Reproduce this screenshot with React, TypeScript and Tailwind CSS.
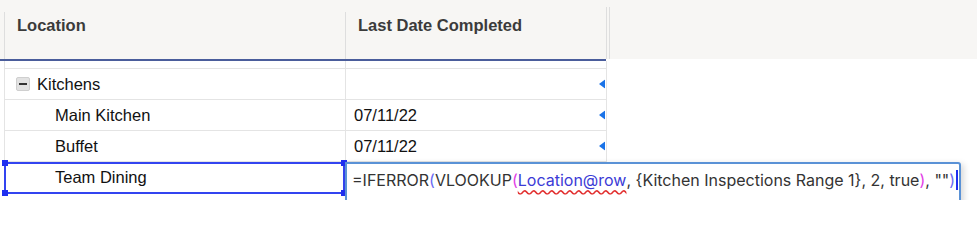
import React from "react";

const cellFont = { fontFamily: '"Liberation Sans", Arial, sans-serif' };

function Tri() {
  return (
    <svg width="6" height="9" viewBox="0 0 6 9" className="absolute right-[1px] top-1/2 -translate-y-1/2">
      <path d="M6 0 L6 9 L0 4.5 Z" fill="#1a73e8" />
    </svg>
  );
}

function Row({ name, date, indent, collapse }: { name: string; date?: string; indent: number; collapse?: boolean }) {
  return (
    <div className="flex h-[31px] border-b border-[#e4e4e4]">
      <div className="w-[341px] border-l border-[#e4e4e4] flex items-center" style={cellFont}>
        <div className="flex items-center" style={{ paddingLeft: indent }}>
          {collapse && (
            <div className="w-[14px] h-[14px] mr-[7px] rounded-[2px] bg-[#e2e2e2] border border-[#cfcfcf] flex items-center justify-center">
              <div className="w-[8px] h-[2px] bg-[#333]" />
            </div>
          )}
          <span className="text-[16.5px] text-[#111]">{name}</span>
        </div>
      </div>
      <div className="relative w-[262px] border-l border-[#e4e4e4] border-r flex items-center pl-[8px]" style={cellFont}>
        {date && <span className="text-[16.5px] text-[#111]">{date}</span>}
        <Tri />
      </div>
    </div>
  );
}

export default function App() {
  return (
    <div className="relative w-[977px] h-[200px] overflow-hidden bg-white">
      {/* header */}
      <div className="flex h-[59px] bg-[#f7f6f4]">
        <div className="w-[4px]" />
        <div className="mt-[12px] w-[341px] border-l border-[#dedede] pl-[12px] pt-[1px]">
          <span className="text-[16.5px] font-bold text-[#3b3b3b] leading-[20px]" style={cellFont}>Location</span>
        </div>
        <div className="mt-[12px] w-[261px] border-l border-[#dedede] pl-[12px] pt-[1px]">
          <span className="text-[16.5px] font-bold text-[#3b3b3b] leading-[20px]" style={cellFont}>Last Date Completed</span>
        </div>
        <div className="mt-[7px] w-[4px] border-l border-r border-[#dedede]" />
      </div>
      <div className="w-[606px] h-[2px] bg-[#4a5d9b]" />
      {/* grid */}
      <div className="ml-[4px] w-[603px]">
        <div className="flex h-[8px] border-b border-[#e4e4e4]">
          <div className="w-[341px] border-l border-[#e4e4e4]" />
          <div className="w-[262px] border-l border-r border-[#e4e4e4]" />
        </div>
        <Row name="Kitchens" indent={11} collapse />
        <Row name="Main Kitchen" date="07/11/22" indent={50} />
        <Row name="Buffet" date="07/11/22" indent={50} />
        <Row name="Team Dining" indent={50} />
      </div>

      {/* selection */}
      <div className="absolute left-[4px] top-[162px] w-[341px] h-[32px] border-2 border-[#3344f0]">
        <div className="absolute -left-[4px] -top-[4px] w-[6px] h-[6px] bg-[#1f2ff0]" />
        <div className="absolute -right-[4px] -top-[4px] w-[6px] h-[6px] bg-[#1f2ff0]" />
        <div className="absolute -left-[4px] -bottom-[4px] w-[6px] h-[6px] bg-[#1f2ff0]" />
        <div className="absolute -right-[4px] -bottom-[4px] w-[6px] h-[6px] bg-[#1f2ff0]" />
      </div>

      {/* formula editor */}
      <div className="absolute left-[345px] top-[162px] w-[616px] h-[60px] border-2 border-[#5a92d6] rounded-tr-[3px] bg-white shadow-[3px_2px_6px_rgba(0,0,0,0.15)] pl-[5px] pt-[5px]">
        <div className="flex items-center whitespace-nowrap text-[16px] leading-[22px] text-[#333]" style={{ fontFamily: "Inter, sans-serif" }}>
          <span>=IFERROR</span>
          <span className="text-[#6a6af2]">(</span>
          <span>VLOOKUP</span>
          <span className="text-[#e23de6]">(</span>
          <span className="text-[#3b3bd6] underline decoration-wavy decoration-[#e23030] underline-offset-[3px]">Location@row</span>
          <span>, {"{"}Kitchen Inspections Range 1{"}"}, 2, true</span>
          <span className="text-[#e23de6]">)</span>
          <span>, ""</span>
          <span className="text-[#6a6af2]">)</span>
          <span className="w-[2px] h-[20px] bg-[#1f2ff0] ml-[1px]" />
        </div>
      </div>
    </div>
  );
}
